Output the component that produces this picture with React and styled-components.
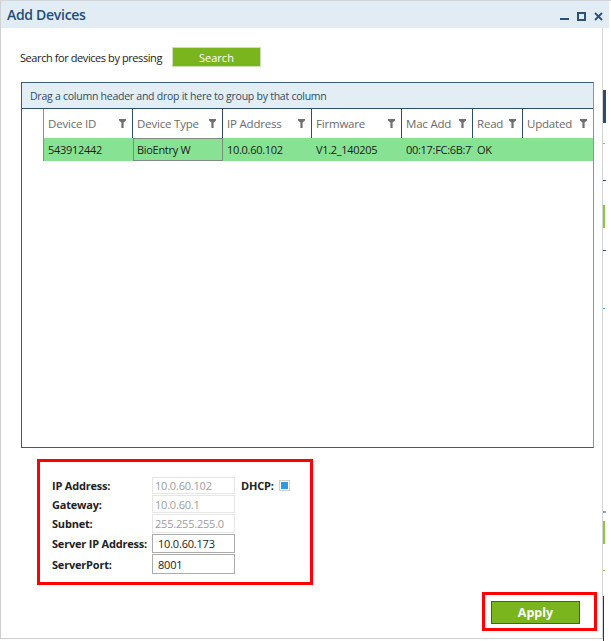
import React from 'react';
import styled, { createGlobalStyle } from 'styled-components';

const GlobalStyle = createGlobalStyle`
  html, body {
    margin: 0;
    padding: 0;
    width: 611px;
    height: 641px;
    overflow: hidden;
    background: #ffffff;
    font-family: "Open Sans", "Noto Sans", sans-serif;
  }
  * { box-sizing: border-box; }
`;

const Window = styled.div`
  width: 611px;
  height: 641px;
  display: flex;
  flex-direction: column;
  border-top: 1px solid #d6d6d6;
`;

const TitleBar = styled.div`
  height: 27px;
  background: #e2ecf4;
  display: flex;
  align-items: center;
  justify-content: space-between;
  padding: 0 6px 0 6px;
  border-left: 1px solid #d0d0d0;
  margin-right: 2px;
`;

const Title = styled.div`
  font-size: 14px;
  font-weight: 600;
  color: #1d4e78;
  letter-spacing: -0.3px;
`;

const Controls = styled.div`
  display: flex;
  align-items: center;
  gap: 8px;
  margin-top: 3px;
`;

const Main = styled.div`
  flex: 1;
  display: flex;
`;

const Body = styled.div`
  width: 603px;
  height: 611px;
  border-left: 1px solid #d0d0d0;
  border-right: 1px solid #d4d4d4;
  border-bottom: 1px solid #cfcfcf;
  display: flex;
  flex-direction: column;
`;

const Backdrop = styled.div`
  flex: 1;
  display: flex;
  flex-direction: column;
  padding-top: 62px;
`;

const Mark = styled.div`
  height: ${(p) => p.h}px;
  margin-top: ${(p) => p.gap}px;
  background: ${(p) => p.color};
  width: ${(p) => p.w || 8}px;
`;

const SearchRow = styled.div`
  display: flex;
  align-items: center;
  gap: 10px;
  margin-top: 19px;
  padding-left: 19px;
  height: 20px;
`;

const Hint = styled.span`
  font-size: 11px;
  color: #222;
  letter-spacing: -0.42px;
`;

const GreenButton = styled.button`
  width: ${(p) => p.w}px;
  height: ${(p) => p.h}px;
  background: #7ab51d;
  color: #fff;
  border: 1px solid ${(p) => p.edge};
  font-family: "Open Sans", sans-serif;
  font-size: ${(p) => p.size}px;
  font-weight: ${(p) => p.weight};
  padding: 0;
  cursor: pointer;
`;

const Grid = styled.div`
  margin: 15px 0 0 20px;
  width: 573px;
  height: 366px;
  border: 1px solid #3d5b74;
  border-right-color: #7f98ab;
  display: flex;
  flex-direction: column;
`;

const GroupPanel = styled.div`
  height: 26px;
  background: #e3edf4;
  border-bottom: 1px solid #2f4d66;
  display: flex;
  align-items: center;
  padding-left: 8px;
  font-size: 10.5px;
  color: #2c4c68;
  letter-spacing: -0.25px;
`;

const columns = '22px 89px 90px 89px 90px 71px 50px 1fr';

const HeaderRow = styled.div`
  display: grid;
  grid-template-columns: ${columns};
  height: 29px;
`;

const HeaderCell = styled.div`
  display: flex;
  align-items: center;
  justify-content: space-between;
  padding: 0 6px 0 4px;
  border-right: 1px solid ${(p) => (p.indicator ? '#5b9bd5' : '#2f4d66')};
  font-size: 11.5px;
  color: #6a6a6a;
  letter-spacing: -0.2px;
  &:last-child { border-right: none; }
`;

const DataRow = styled.div`
  display: grid;
  grid-template-columns: ${columns};
  height: 23px;
`;

const DataCell = styled.div`
  display: flex;
  align-items: center;
  padding-left: 4px;
  font-size: 11px;
  color: #1a1a1a;
  white-space: nowrap;
  overflow: hidden;
  letter-spacing: -0.3px;
  background: ${(p) => (p.indicator ? '#ffffff' : '#87e393')};
  border-right: ${(p) => (p.indicator ? '1px solid #8a8a8a' : 'none')};
  outline: ${(p) => (p.current ? '1px solid #7d8c7f' : 'none')};
  outline-offset: -1px;
`;

const FormBox = styled.div`
  margin: 11px 0 0 36px;
  width: 276px;
  height: 126px;
  border: 3px solid #ff0000;
  padding: 15px 0 0 12px;
  display: grid;
  grid-template-columns: 100px 83px auto;
  grid-template-rows: 17px 18px 19px 19px 20px;
  row-gap: 1px;
  align-items: center;
`;

const Label = styled.div`
  font-size: 11px;
  font-weight: 700;
  color: #222;
  letter-spacing: -0.2px;
`;

const Field = styled.input`
  height: 100%;
  width: 100%;
  border: 1px solid ${(p) => (p.readOnly ? '#e6e6e6' : '#ababab')};
  color: ${(p) => (p.readOnly ? '#9d9d9d' : '#222')};
  padding: 0 0 0 ${(p) => (p.readOnly ? 2 : 5)}px;
  font-family: "Open Sans", sans-serif;
  font-size: 11px;
  letter-spacing: -0.2px;
  background: #fff;
  outline: none;
`;

const Dhcp = styled.div`
  display: flex;
  align-items: center;
  gap: 5px;
  padding-left: 6px;
`;

const CheckBox = styled.span`
  width: 11px;
  height: 11px;
  border: 1px solid #cfcfcf;
  display: flex;
  align-items: center;
  justify-content: center;
  &::after {
    content: '';
    width: 7px;
    height: 7px;
    background: #2a9be0;
  }
`;

const Footer = styled.div`
  display: flex;
  justify-content: flex-end;
  margin: 7px 5px 0 0;
`;

const ApplyBox = styled.div`
  width: 115px;
  height: 39px;
  border: 3px solid #ff0000;
  padding: 5px 0 0 6px;
`;

const FilterIcon = () => (
  <svg width="7" height="9" viewBox="0 0 7 9">
    <path d="M0 0H7V1.5L4.6 3.5V9H2.4V3.5L0 1.5Z" fill="#6f6f6f" />
  </svg>
);

const headers = ['Device ID', 'Device Type', 'IP Address', 'Firmware', 'Mac Add', 'Read', 'Updated'];
const row = ['543912442', 'BioEntry W', '10.0.60.102', 'V1.2_140205', '00:17:FC:6B:7\u02D9', 'OK', ''];

const backdropMarks = [
  { gap: 0, h: 33, color: '#2f4d6a', w: 3 },
  { gap: 20, h: 1, color: '#8cc63f', w: 2 },
  { gap: 36, h: 1, color: '#2f4d6a', w: 3 },
  { gap: 24, h: 23, color: '#8cc63f', w: 2 },
  { gap: 22, h: 1, color: '#2f4d6a', w: 3 },
  { gap: 57, h: 1, color: '#3a9ad9', w: 2 },
  { gap: 202, h: 2, color: '#8aa0b0', w: 3 },
  { gap: 8, h: 23, color: '#8cc63f', w: 2 },
  { gap: 26, h: 1, color: '#8cc63f', w: 2 },
  { gap: 25, h: 45, color: '#333333', w: 1 },
];

export default function App() {
  return (
    <>
      <GlobalStyle />
      <Window>
        <TitleBar>
          <Title>Add Devices</Title>
          <Controls>
            <svg width="9" height="10" viewBox="0 0 9 10">
              <rect x="0" y="7" width="9" height="2" fill="#2b5275" />
            </svg>
            <svg width="9" height="9" viewBox="0 0 9 9">
              <rect x="1" y="1" width="7" height="7" fill="none" stroke="#2b5275" strokeWidth="2" />
            </svg>
            <svg width="9" height="9" viewBox="0 0 9 9">
              <path d="M1 1L8 8M8 1L1 8" stroke="#2b5275" strokeWidth="1.8" />
            </svg>
          </Controls>
        </TitleBar>
        <Main>
          <Body>
            <SearchRow>
              <Hint>Search for devices by pressing</Hint>
              <GreenButton w={89} h={20} edge="#cfe0b8" size={11} weight={400}>Search</GreenButton>
            </SearchRow>
            <Grid>
              <GroupPanel>Drag a column header and drop it here to group by that column</GroupPanel>
              <HeaderRow>
                <HeaderCell indicator />
                {headers.map((h) => (
                  <HeaderCell key={h}>
                    <span>{h}</span>
                    <FilterIcon />
                  </HeaderCell>
                ))}
              </HeaderRow>
              <DataRow>
                <DataCell indicator />
                {row.map((v, i) => (
                  <DataCell key={i} current={i === 1}>{v}</DataCell>
                ))}
              </DataRow>
            </Grid>
            <FormBox>
              <Label>IP Address:</Label>
              <Field readOnly value="10.0.60.102" />
              <Dhcp>
                <Label>DHCP:</Label>
                <CheckBox />
              </Dhcp>
              <Label>Gateway:</Label>
              <Field readOnly value="10.0.60.1" />
              <span />
              <Label>Subnet:</Label>
              <Field readOnly value="255.255.255.0" />
              <span />
              <Label>Server IP Address:</Label>
              <Field defaultValue="10.0.60.173" />
              <span />
              <Label>ServerPort:</Label>
              <Field defaultValue="8001" />
              <span />
            </FormBox>
            <Footer>
              <ApplyBox>
                <GreenButton w={89} h={23} edge="#3d5a6b" size={12.5} weight={700}>Apply</GreenButton>
              </ApplyBox>
            </Footer>
          </Body>
          <Backdrop>
            {backdropMarks.map((m, i) => (
              <Mark key={i} {...m} />
            ))}
          </Backdrop>
        </Main>
      </Window>
    </>
  );
}
